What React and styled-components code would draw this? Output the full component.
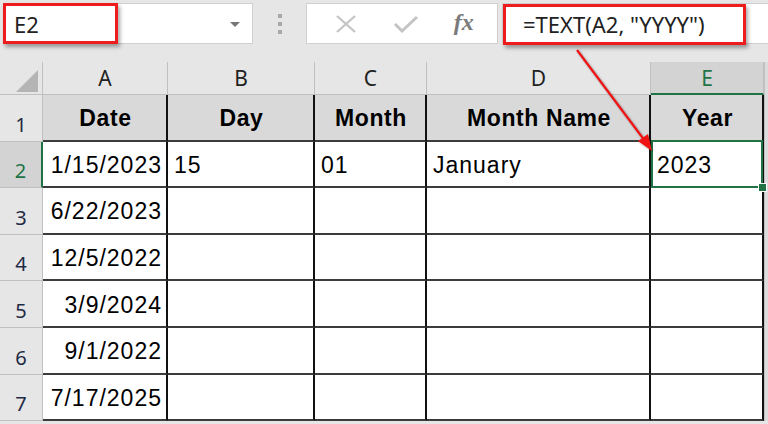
import styled, { createGlobalStyle } from "styled-components";

const GlobalStyle = createGlobalStyle`
  html, body {
    margin: 0;
    padding: 0;
    background: #e6e6e6;
  }
  * {
    box-sizing: border-box;
  }
`;

const columns = [
  { key: "A", width: 125 },
  { key: "B", width: 147 },
  { key: "C", width: 112 },
  { key: "D", width: 224 },
  { key: "E", width: 113 },
];

const rows = [
  ["Date", "Day", "Month", "Month Name", "Year"],
  ["1/15/2023", "15", "01", "January", "2023"],
  ["6/22/2023", "", "", "", ""],
  ["12/5/2022", "", "", "", ""],
  ["3/9/2024", "", "", "", ""],
  ["9/1/2022", "", "", "", ""],
  ["7/17/2025", "", "", "", ""],
];

export default function App() {
  return (
    <Page>
      <GlobalStyle />
      <Toolbar>
        <NameBox>
          <span>E2</span>
          <DropArrow />
        </NameBox>
        <Grip>
          <i />
          <i />
          <i />
        </Grip>
        <FormulaButtons>
          <svg width="24" height="20" viewBox="0 0 24 20">
            <path d="M3 2 L21 18 M21 2 L3 18" stroke="#c4c4c4" strokeWidth="2.2" fill="none" />
          </svg>
          <svg width="26" height="20" viewBox="0 0 26 20">
            <path d="M2 10 L9 17 L24 3" stroke="#c4c4c4" strokeWidth="3" fill="none" />
          </svg>
          <Fx>fx</Fx>
        </FormulaButtons>
        <FormulaInput>=TEXT(A2, "YYYY")</FormulaInput>
        <RedBox style={{ left: 3, top: 3, width: 115, height: 41 }} />
        <RedBox style={{ left: 503, top: 4, width: 243, height: 41 }} />
      </Toolbar>

      <Sheet>
        <Corner>
          <svg width="22" height="22" viewBox="0 0 22 22">
            <path d="M22 0 L22 22 L0 22 Z" fill="#b4b4b4" />
          </svg>
        </Corner>
        {columns.map((c) => (
          <ColHead key={c.key} $active={c.key === "E"}>
            {c.key}
          </ColHead>
        ))}
        <Edge />
        {rows.map((r, ri) => (
          <Row key={ri}>
            <RowHead $active={ri === 1}>{ri + 1}</RowHead>
            {r.map((v, ci) => (
              <Cell
                key={ci}
                $head={ri === 0}
                $right={ri > 0 && ci === 0}
                $selected={ri === 1 && ci === 4}
              >
                {v}
              </Cell>
            ))}
            <Edge />
          </Row>
        ))}
      </Sheet>

      <Arrow width="768" height="424" viewBox="0 0 768 424">
        <g style={{ filter: "drop-shadow(1px 1px 1px rgba(0,0,0,0.35))" }}>
          <line x1="577" y1="50" x2="645" y2="141" stroke="#f01414" strokeWidth="2.2" />
          <path d="M652 151 L638 141 L648 134 Z" fill="#f01414" />
        </g>
      </Arrow>
    </Page>
  );
}

const Page = styled.div`
  position: relative;
  width: 768px;
  height: 424px;
  overflow: hidden;
  background: #e6e6e6;
  font-family: "Liberation Sans", Arial, sans-serif;
`;

const Toolbar = styled.div`
  position: relative;
  height: 47px;
  padding: 3px 0 3px 3px;
  display: flex;
  align-items: stretch;
  margin-bottom: 15px;
`;

const NameBox = styled.div`
  width: 250px;
  background: #fff;
  border: 1px solid #d0d0d0;
  display: flex;
  align-items: center;
  justify-content: space-between;
  padding: 0 12px 0 10px;
  font-family: "Noto Sans", "Open Sans", sans-serif;
  font-size: 22px;
  color: #222;
`;

const DropArrow = styled.div`
  width: 0;
  height: 0;
  border-left: 5px solid transparent;
  border-right: 5px solid transparent;
  border-top: 5px solid #777;
  margin-top: 2px;
`;

const Grip = styled.div`
  width: 53px;
  display: flex;
  flex-direction: column;
  align-items: center;
  justify-content: center;
  gap: 4px;

  i {
    display: block;
    width: 4px;
    height: 4px;
    background: #a8a8a8;
  }
`;

const FormulaButtons = styled.div`
  width: 192px;
  background: #fff;
  border: 1px solid #d0d0d0;
  display: flex;
  align-items: center;
  justify-content: space-around;
  padding: 0 6px 0 10px;
`;

const Fx = styled.span`
  font-family: "Liberation Serif", "Times New Roman", serif;
  font-style: italic;
  font-weight: bold;
  font-size: 24px;
  color: #7a7a7a;
  margin-top: -3px;
`;

const FormulaInput = styled.div`
  flex: 1;
  margin-left: 4px;
  background: #fff;
  border: 1px solid #d0d0d0;
  border-right: none;
  display: flex;
  align-items: center;
  padding-left: 20px;
  font-family: "Noto Sans", "Open Sans", sans-serif;
  font-size: 22px;
  color: #222;
`;

const RedBox = styled.div`
  position: absolute;
  border: 3px solid #ee1c1c;
  box-shadow: 2px 3px 4px rgba(0, 0, 0, 0.35);
`;

const Sheet = styled.div`
  display: grid;
  grid-template-columns: 43px ${columns.map((c) => c.width + "px").join(" ")} 1fr;
  grid-template-rows: 33px repeat(7, 46.6px);
`;

const Row = styled.div`
  display: contents;
`;

const Corner = styled.div`
  background: #e6e6e6;
  border-right: 1px solid #c0c0c0;
  border-bottom: 1px solid #c0c0c0;
  display: flex;
  align-items: flex-end;
  justify-content: flex-end;
  padding: 0 4px 2px 0;
`;

const ColHead = styled.div`
  background: ${(p) => (p.$active ? "#d3d3d3" : "#e6e6e6")};
  color: ${(p) => (p.$active ? "#217346" : "#222")};
  border-right: 1px solid #c0c0c0;
  border-bottom: ${(p) => (p.$active ? "2px solid #217346" : "1px solid #c0c0c0")};
  display: flex;
  align-items: center;
  justify-content: center;
  font-family: "Noto Sans", "Open Sans", sans-serif;
  font-size: 21px;
`;

const RowHead = styled.div`
  background: ${(p) => (p.$active ? "#d3d3d3" : "#e6e6e6")};
  color: ${(p) => (p.$active ? "#217346" : "#1f2a44")};
  border-right: ${(p) => (p.$active ? "2px solid #217346" : "1px solid #c0c0c0")};
  border-bottom: 1px solid #c0c0c0;
  display: flex;
  align-items: flex-end;
  justify-content: center;
  padding-bottom: 3px;
  font-family: "Noto Sans", "Open Sans", sans-serif;
  font-size: 20px;
`;

const Edge = styled.div`
  background: #dcdcdc;
  border-left: 1px solid #c0c0c0;
`;

const Cell = styled.div`
  position: relative;
  background: ${(p) => (p.$head ? "#d9d9d9" : "#fff")};
  border-right: 2px solid #111;
  border-bottom: 2px solid #3c3c3c;
  display: flex;
  align-items: center;
  justify-content: ${(p) => (p.$head ? "center" : p.$right ? "flex-end" : "flex-start")};
  padding: 3px 4px 0 6px;
  font-size: 23px;
  font-weight: ${(p) => (p.$head ? "bold" : "normal")};
  letter-spacing: ${(p) => (p.$head ? "0.6px" : "1px")};
  color: #000;
  white-space: nowrap;

  ${(p) =>
    p.$selected &&
    `
    &::after {
      content: "";
      position: absolute;
      left: 0;
      top: -2px;
      right: -1px;
      bottom: -2px;
      border: 2px solid #217346;
    }
    &::before {
      content: "";
      position: absolute;
      right: -5px;
      bottom: -6px;
      width: 7px;
      height: 7px;
      background: #217346;
      border: 1px solid #fff;
      z-index: 1;
    }
  `}
`;

const Arrow = styled.svg`
  position: absolute;
  left: 0;
  top: 0;
  pointer-events: none;
`;
